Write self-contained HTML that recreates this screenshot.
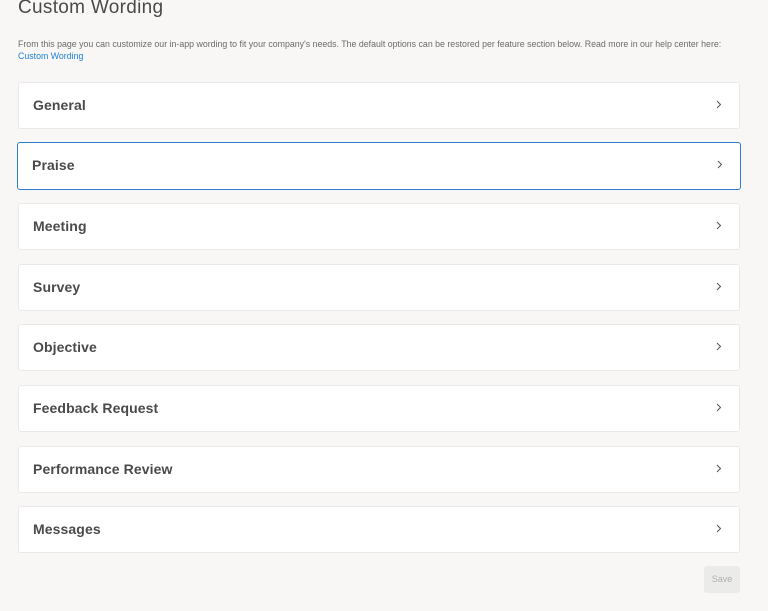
<!DOCTYPE html>
<html><head><style>
body{margin:0;width:768px;height:611px;background:#f8f7f6;font-family:"Liberation Sans",sans-serif;position:relative;overflow:hidden}
h1{position:absolute;left:18px;top:-3px;margin:0;font-size:19px;font-weight:normal;color:#4a4a4a;letter-spacing:0.3px}
.d{position:absolute;left:18px;top:38px;font-size:8.8px;color:#6b6b6b;line-height:12px}
.d a{color:#1d7fd6;text-decoration:none}
.c{position:absolute;left:18px;width:722px;height:47px;background:#fff;border:1px solid #ebe9e7;border-radius:3px;box-sizing:border-box}
.c span{position:absolute;left:14px;top:14px;font-size:14px;color:#4a4a4a;font-weight:bold;letter-spacing:0.1px}
.c svg{position:absolute;right:17px;top:17px}
.sel{border:1.5px solid #2f7fd0}
.s{position:absolute;left:704px;top:566px;width:36px;height:27px;background:#ebebea;border-radius:3px;color:#b0b0b0;font-size:9px;text-align:center;line-height:27px}
</style></head><body>
<h1>Custom Wording</h1>
<div class="d">From this page you can customize our in-app wording to fit your company's needs. The default options can be restored per feature section below. Read more in our help center here:<br><a>Custom Wording</a></div>
<div class="c" style="top:82px"><span>General</span><svg width="6" height="9"><path d="M1 1l3.5 3.5L1 8" stroke="#555" stroke-width="1" fill="none"/></svg></div>
<div class="c sel" style="top:142px;left:17px;width:724px;height:48px"><span>Praise</span><svg width="6" height="9"><path d="M1 1l3.5 3.5L1 8" stroke="#555" stroke-width="1" fill="none"/></svg></div>
<div class="c" style="top:203px"><span>Meeting</span><svg width="6" height="9"><path d="M1 1l3.5 3.5L1 8" stroke="#555" stroke-width="1" fill="none"/></svg></div>
<div class="c" style="top:264px"><span>Survey</span><svg width="6" height="9"><path d="M1 1l3.5 3.5L1 8" stroke="#555" stroke-width="1" fill="none"/></svg></div>
<div class="c" style="top:324px"><span>Objective</span><svg width="6" height="9"><path d="M1 1l3.5 3.5L1 8" stroke="#555" stroke-width="1" fill="none"/></svg></div>
<div class="c" style="top:385px"><span>Feedback Request</span><svg width="6" height="9"><path d="M1 1l3.5 3.5L1 8" stroke="#555" stroke-width="1" fill="none"/></svg></div>
<div class="c" style="top:446px"><span>Performance Review</span><svg width="6" height="9"><path d="M1 1l3.5 3.5L1 8" stroke="#555" stroke-width="1" fill="none"/></svg></div>
<div class="c" style="top:506px"><span>Messages</span><svg width="6" height="9"><path d="M1 1l3.5 3.5L1 8" stroke="#555" stroke-width="1" fill="none"/></svg></div>
<div class="s">Save</div>
</body></html>
